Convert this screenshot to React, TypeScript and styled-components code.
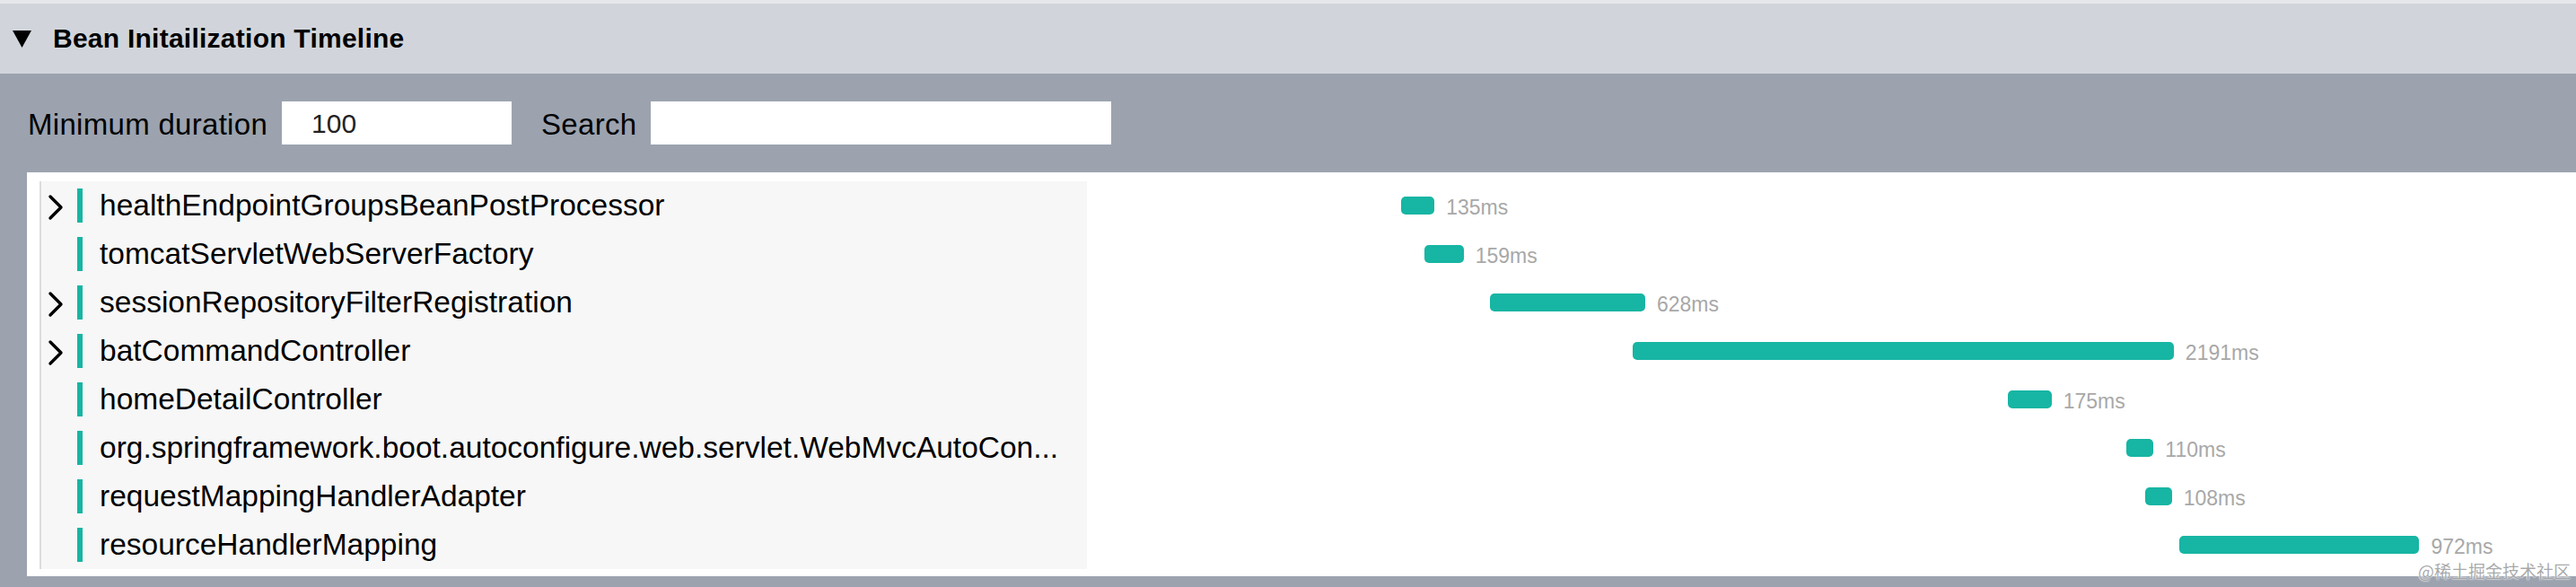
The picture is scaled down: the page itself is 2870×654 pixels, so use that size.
import React from "react";
import styled, { createGlobalStyle } from "styled-components";

const GlobalStyle = createGlobalStyle`
  html, body {
    margin: 0;
    padding: 0;
    background: #9ca3af;
  }
  body {
    font-family: "Liberation Sans", Arial, Helvetica, sans-serif;
    color: #000;
  }
  * { box-sizing: border-box; }
`;

const Page = styled.div`
  position: relative;
  width: 100%;
  height: 654px;
  overflow: hidden;
  border-top: 4px solid #e5e7eb;
  background: #9ca3af;
`;

const Header = styled.div`
  height: 78px;
  display: flex;
  align-items: center;
  gap: 24px;
  padding-left: 14px;
  background: #d1d5db;
`;

const Title = styled.h2`
  margin: 0;
  font-size: 30px;
  font-weight: 700;
  letter-spacing: 0.25px;
  color: #000;
`;

const Body = styled.div`
  display: flex;
  flex-direction: column;
  gap: 31px;
  padding: 31px 0 12px 30px;
`;

const Toolbar = styled.div`
  display: flex;
  align-items: center;
  gap: 16px;
  height: 48px;
  padding-left: 1px;
`;

const FieldLabel = styled.label`
  margin-top: 3px;
  font-size: 33px;
  font-weight: 400;
  letter-spacing: 0.3px;
  color: #000;
  white-space: nowrap;
`;

const TextInput = styled.input<{ $w: number; $after?: number }>`
  width: ${(p) => p.$w}px;
  height: 48px;
  margin-right: ${(p) => p.$after ?? 0}px;
  border: none;
  outline: none;
  background: #fff;
  padding: 2px 0 0 33px;
  font-family: inherit;
  font-size: 30px;
  color: #222;
`;

const Panel = styled.div`
  display: flex;
  height: 450px;
  padding: 10px 0 8px 14px;
  background: #fff;
`;

const NameList = styled.div`
  width: 1167px;
  flex: none;
  background: #f7f7f7;
  border-left: 2px solid #dcdcdc;
`;

const NameRow = styled.div`
  display: flex;
  align-items: center;
  height: 54px;
`;

const Toggle = styled.span`
  width: 40px;
  height: 54px;
  flex: none;
  display: flex;
  align-items: center;
  padding-left: 7px;
  padding-top: 4px;
`;

const Marker = styled.span`
  width: 6px;
  height: 38px;
  flex: none;
  background: #17b5a3;
`;

const Name = styled.span`
  margin-left: 19px;
  padding-right: 12px;
  font-size: 33.5px;
  color: #000;
  white-space: nowrap;
  overflow: hidden;
  text-overflow: ellipsis;
  min-width: 0;
`;

const Timeline = styled.div`
  flex: 1;
  min-width: 0;
`;

const TimeRow = styled.div`
  display: flex;
  align-items: center;
  height: 54px;
`;

const Bar = styled.span`
  flex: none;
  height: 20px;
  border-radius: 5px;
  background: #17b5a3;
`;

const Duration = styled.span`
  margin-left: 13px;
  margin-top: 5px;
  font-size: 23px;
  color: #a8a8a8;
  white-space: nowrap;
`;

const Watermark = styled.div`
  position: absolute;
  right: 6px;
  bottom: 5px;
  font-family: "Noto Sans CJK SC", "Liberation Sans", sans-serif;
  font-size: 19px;
  color: rgba(140, 140, 140, 0.75);
  text-shadow: 0 0 2px #fff, 0 0 2px #fff;
`;

const Caret = () => (
  <svg width="21" height="19" viewBox="0 0 21 19">
    <polygon points="0,0 21,0 10.5,19" fill="#000" />
  </svg>
);

const Chevron = () => (
  <svg width="18" height="30" viewBox="0 0 18 30">
    <polyline
      points="3,3 15,15 3,27"
      fill="none"
      stroke="#000"
      strokeWidth="3.4"
      strokeLinecap="round"
      strokeLinejoin="round"
    />
  </svg>
);

type Bean = { name: string; start: number; duration: number; children?: boolean };

const beans: Bean[] = [
  { name: "healthEndpointGroupsBeanPostProcessor", start: 1272, duration: 135, children: true },
  { name: "tomcatServletWebServerFactory", start: 1366, duration: 159 },
  { name: "sessionRepositoryFilterRegistration", start: 1632, duration: 628, children: true },
  { name: "batCommandController", start: 2209, duration: 2191, children: true },
  { name: "homeDetailController", start: 3730, duration: 175 },
  { name: "org.springframework.boot.autoconfigure.web.servlet.WebMvcAutoCon...", start: 4208, duration: 110 },
  { name: "requestMappingHandlerAdapter", start: 4284, duration: 108 },
  { name: "resourceHandlerMapping", start: 4422, duration: 972 },
];

const PX_PER_MS = 0.2752;

export default function App() {
  return (
    <>
      <GlobalStyle />
      <Page>
        <Header>
          <Caret />
          <Title>Bean Initailization Timeline</Title>
        </Header>
        <Body>
          <Toolbar>
            <FieldLabel>Minimum duration</FieldLabel>
            <TextInput $w={256} $after={17} defaultValue="100" />
            <FieldLabel>Search</FieldLabel>
            <TextInput $w={513} />
          </Toolbar>
          <Panel>
            <NameList>
              {beans.map((b) => (
                <NameRow key={b.name}>
                  <Toggle>{b.children ? <Chevron /> : null}</Toggle>
                  <Marker />
                  <Name>{b.name}</Name>
                </NameRow>
              ))}
            </NameList>
            <Timeline>
              {beans.map((b) => (
                <TimeRow key={b.name}>
                  <Bar
                    style={{
                      marginLeft: b.start * PX_PER_MS,
                      width: b.duration * PX_PER_MS,
                    }}
                  />
                  <Duration>{b.duration}ms</Duration>
                </TimeRow>
              ))}
            </Timeline>
          </Panel>
        </Body>
        <Watermark>@稀土掘金技术社区</Watermark>
      </Page>
    </>
  );
}
